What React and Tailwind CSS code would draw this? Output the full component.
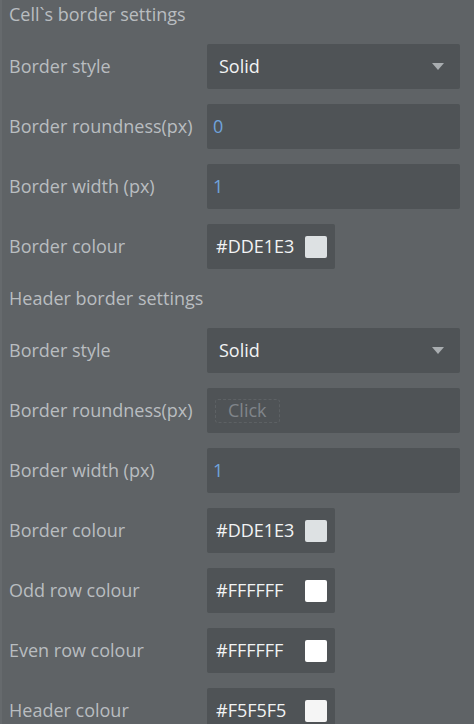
const labelCls = "w-[198px] shrink-0 text-[18px] text-[#b9bdc0]";
const boxCls = "h-[45px] rounded-[2px] bg-[#4f5356] flex items-center";
const rowCls = "flex items-center shrink-0 h-[45px]";

const SelectRow = ({ label, value }) => (
    <div className={rowCls}>
        <div className={labelCls}>{label}</div>
        <div className={`${boxCls} w-[253px] pl-[12px] pr-[16px] justify-between`}>
            <span className="text-[18px] text-[#f2f3f4]">{value}</span>
            <svg width="12" height="7" viewBox="0 0 12 7">
                <polygon points="0,0 12,0 6,7" fill="#a9adb0" />
            </svg>
        </div>
    </div>
);

const NumberRow = ({ label, value }) => (
    <div className={rowCls}>
        <div className={labelCls}>{label}</div>
        <div className={`${boxCls} w-[253px] pl-[6px]`}>
            {value !== undefined ? (
                <span className="text-[18px] text-[#6fa3dc]">{value}</span>
            ) : (
                <span className="ml-[2px] h-[24px] px-[12px] flex items-center rounded-[3px] border border-dashed border-[#5d6164] text-[18px] text-[#80858a]">
                    Click
                </span>
            )}
        </div>
    </div>
);

const ColourRow = ({ label, hex, swatch }) => (
    <div className={rowCls}>
        <div className={labelCls}>{label}</div>
        <div className={`${boxCls} w-[128px] pl-[9px] pr-[8px] justify-between`}>
            <span className="text-[18px] text-[#f2f3f4]">{hex}</span>
            <span className="w-[22px] h-[22px] rounded-[2px]" style={{ backgroundColor: swatch }} />
        </div>
    </div>
);

const Heading = ({ children }) => (
    <div className="h-[29px] shrink-0 flex items-center text-[18px] text-[#b9bdc0]">{children}</div>
);

export default function App() {
    return (
        <div
            className="w-[474px] h-[724px] overflow-hidden bg-[#5f6366] border-l-2 border-[#666a6d] pl-[7px] flex flex-col gap-[15px]"
            style={{ fontFamily: '"Open Sans", "Noto Sans", sans-serif' }}
        >
            <Heading>Cell`s border settings</Heading>
            <SelectRow label="Border style" value="Solid" />
            <NumberRow label="Border roundness(px)" value="0" />
            <NumberRow label="Border width (px)" value="1" />
            <ColourRow label="Border colour" hex="#DDE1E3" swatch="#dde1e3" />

            <Heading>Header border settings</Heading>
            <SelectRow label="Border style" value="Solid" />
            <NumberRow label="Border roundness(px)" />
            <NumberRow label="Border width (px)" value="1" />
            <ColourRow label="Border colour" hex="#DDE1E3" swatch="#dde1e3" />
            <ColourRow label="Odd row colour" hex="#FFFFFF" swatch="#ffffff" />
            <ColourRow label="Even row colour" hex="#FFFFFF" swatch="#ffffff" />
            <ColourRow label="Header colour" hex="#F5F5F5" swatch="#f5f5f5" />
        </div>
    );
}
